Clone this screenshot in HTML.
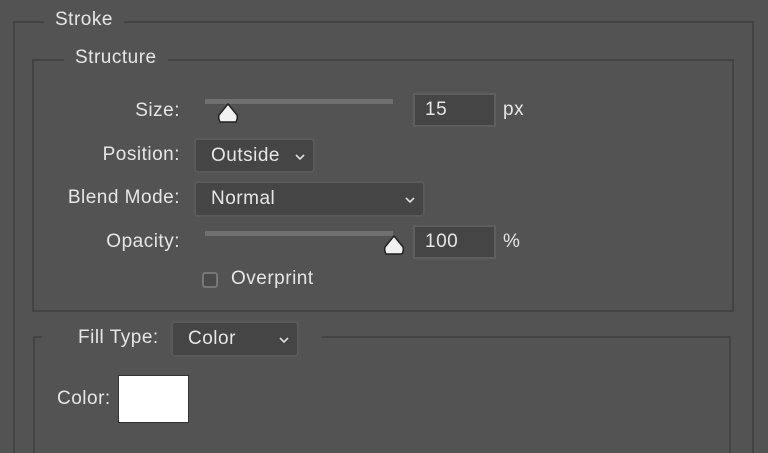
<!DOCTYPE html>
<html style="overflow:hidden;height:453px"><head><style>
body{margin:0;width:768px;height:453px;background:#535353;overflow:hidden;font-family:"Liberation Sans",sans-serif;font-size:19px;letter-spacing:0.5px;color:#e6e6e6;position:relative}
.a{position:absolute}
.box{position:absolute;border:2px solid #434343}
.open{border-bottom:none}
.lg{position:absolute;background:#535353;padding:0 11px;line-height:22px}
.lbl{position:absolute;text-align:right;line-height:22px;white-space:nowrap}
.inp{position:absolute;background:#454545;border:2px solid #5e5e5e;box-sizing:border-box;line-height:30px;padding-left:10px}
.dd{position:absolute;background:#454545;border:2px solid #5a5a5a;border-radius:4px;box-sizing:border-box;line-height:31px;padding-left:15px}
.dd svg{position:absolute;right:7px;top:13px}
.track{position:absolute;height:5px;background:#707070}
</style></head><body>
<div class="box open" style="left:13px;top:21px;width:737px;height:432px"></div>
<div class="lg" style="left:44px;top:9px">Stroke</div>
<div class="box" style="left:32px;top:59px;width:698px;height:249px"></div>
<div class="lg" style="left:64px;top:47px">Structure</div>

<div class="lbl" style="right:588px;top:100px">Size:</div>
<div class="track" style="left:205px;top:99px;width:188px"></div>
<svg class="a" style="left:216px;top:102px" width="24" height="24"><path d="M12 2 L21 13 Q22 16 20 20 L4 20 Q2 16 3 13 Z" fill="#f2f2f2" stroke="#222" stroke-width="1.5"/></svg>
<div class="inp" style="left:413px;top:93px;width:83px;height:34px">15</div>
<div class="a" style="left:503px;top:99px">px</div>

<div class="lbl" style="right:588px;top:144px">Position:</div>
<div class="dd" style="left:194px;top:138px;width:121px;height:35px">Outside<svg width="12" height="8"><path d="M2 2 L6 6 L10 2" fill="none" stroke="#ddd" stroke-width="1.6"/></svg></div>

<div class="lbl" style="right:588px;top:187px">Blend Mode:</div>
<div class="dd" style="left:194px;top:181px;width:231px;height:36px">Normal<svg width="12" height="8"><path d="M2 2 L6 6 L10 2" fill="none" stroke="#ddd" stroke-width="1.6"/></svg></div>

<div class="lbl" style="right:588px;top:231px">Opacity:</div>
<div class="track" style="left:205px;top:231px;width:188px"></div>
<svg class="a" style="left:382px;top:234px" width="24" height="24"><path d="M12 2 L21 13 Q22 16 20 20 L4 20 Q2 16 3 13 Z" fill="#f2f2f2" stroke="#222" stroke-width="1.5"/></svg>
<div class="inp" style="left:413px;top:225px;width:83px;height:34px">100</div>
<div class="a" style="left:503px;top:231px">%</div>

<div class="a" style="left:202px;top:272px;width:12px;height:12px;border:2px solid #777;border-radius:3px;background:#4a4a4a"></div>
<div class="a" style="left:231px;top:268px;line-height:22px">Overprint</div>

<div class="box open" style="left:33px;top:336px;width:694px;height:117px"></div>
<div class="a" style="left:42px;top:320px;width:280px;height:40px;background:#535353"></div>
<div class="a" style="left:78px;top:327px;line-height:22px">Fill Type:</div>
<div class="dd" style="left:171px;top:321px;width:128px;height:36px">Color<svg width="12" height="8"><path d="M2 2 L6 6 L10 2" fill="none" stroke="#ddd" stroke-width="1.6"/></svg></div>

<div class="a" style="left:57px;top:388px;line-height:22px">Color:</div>
<div class="a" style="left:118px;top:375px;width:69px;height:46px;background:#fff;border:1px solid #333"></div>
</body></html>
